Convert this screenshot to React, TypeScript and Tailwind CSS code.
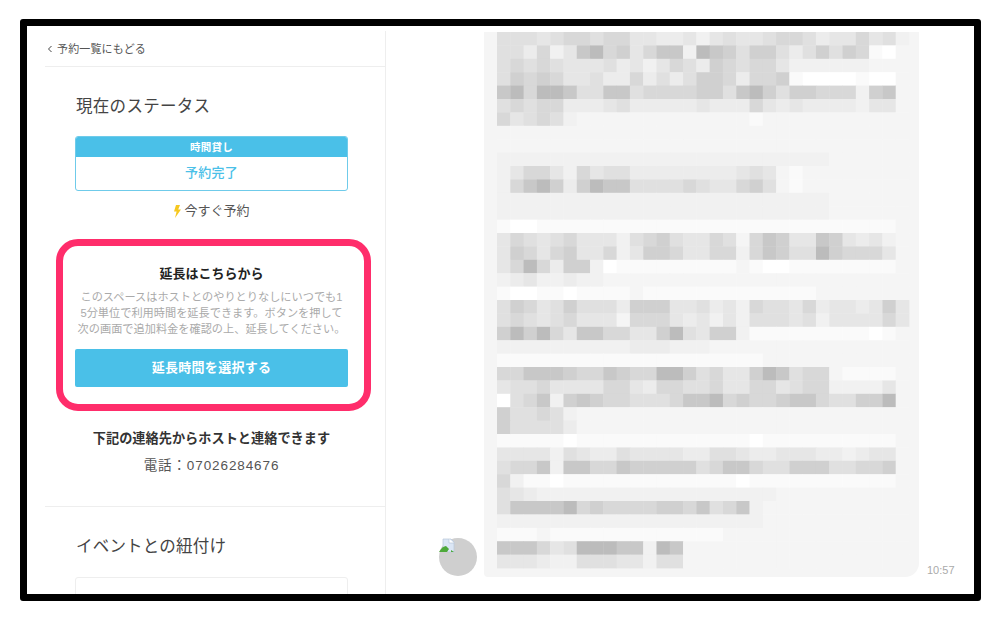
const FONT = "font-['Liberation_Sans','Noto_Sans_CJK_JP',sans-serif]";

// grey levels for the pixelated message body
const GREYS: Record<string, string> = {
  '0': '#bcbcbc',
  '1': '#c8c8c8',
  '2': '#d0d0d0',
  '3': '#d8d8d8',
  '4': '#e0e0e0',
  '5': '#e6e6e6',
  '6': '#ececec',
  '7': '#f1f1f1',
  '8': '#f5f5f5',
  '9': '#fafafa',
  w: '#ffffff',
};

const MOSAIC = [
  '4445433433556657545543346553547',
  '446375103253117012422464242' + '39w8',
  '4343455546575346234335777777888',
  '4232355466364642236332' + '9wwww9ww8',
  '1030014411433332241024223337218',
  '4343366654666665666356566667558',
  '3543478888888888888988888888888',
  '8888888888888888888888888888888',
  '8888888888888888888888888888888',
  '7777777777777777777777777888888',
  '7533573544666666665458988888888',
  '7310262011444434553248988888888',
  '7777777777777777777777777888888',
  '7777777777777777777777777888888',
  '9ww9999999999999999999999999998',
  '5345435557432455348312551256578',
  '5235325537522355337312440233358',
  '53036227w99999999989ww999999998',
  '7657767788888888888888888888888',
  '9ww99w9999899999999999998888888',
  '4235424446222554657344536556525',
  '4345435558333565757444547555535',
  '2020351133552045227999999999w98',
  '7777777777666777888888888888888',
  '9999999999999999999988888888888',
  '3311123312330024355201433899998',
  '5443555533563344355335433777758',
  'w431721233444311032332113442208',
  '2443478888888888888888888888888',
  '2444468888888888888888888888888',
  '99999w9999999999999w99999999998',
  '5555745664555566445665556676558',
  '4331711331222224311344222443328',
  '3799w9999999999999w999999999998',
  '4567777777777777777778888888888',
  '4111103233332231431788888888888',
  '7777777777777777777788888888888',
  '9998999999999999988888888888888',
  '1113540001170188888888888888888',
  '5556774445574488888888888888888',
];

const CELL_W = 13.29;
const CELL_H = 13.4;

function Mosaic() {
  return (
    <svg width="420" height="540" viewBox="0 0 420 540" className="block blur-[0.4px]">
      {MOSAIC.map((row, y) =>
        row
          .slice(0, 31)
          .split('')
          .map((c, x) => (
            <rect
              key={`${x}-${y}`}
              x={x * CELL_W}
              y={y * CELL_H}
              width={CELL_W + 0.4}
              height={CELL_H + 0.4}
              fill={GREYS[c]}
            />
          ))
      )}
    </svg>
  );
}

function BrokenImage() {
  return (
    <svg width="16" height="16" viewBox="0 0 16 16" className="block">
      <path d="M4 1h8l3 3v10H8L4 9z" fill="#dbe6f5" stroke="#b8c6d8" strokeWidth="0.7" />
      <path d="M10 1v4h5" fill="#fff" stroke="#b8c6d8" strokeWidth="0.7" />
      <path d="M0 14c2-4 5-6 7-6l3 3-2 3z" fill="#4ea93a" />
      <path d="M12 12l3 2h-3z" fill="#4ea93a" />
    </svg>
  );
}

export default function App() {
  return (
    <div className={`w-[1000px] h-[621px] bg-white overflow-hidden pt-[19px] pl-[20px] ${FONT}`}>
      <div className="w-[961px] h-[582px] border-[7px] border-black rounded-[3px] bg-white overflow-hidden flex pt-[5px]">
        {/* left column */}
        <aside className="w-[359px] shrink-0 border-r border-[#eeeeee] pl-[18px] overflow-hidden">
          <div className="h-[36px] border-b border-[#eeeeee] flex items-center pl-[2px] pt-[1px]">
            <svg width="6" height="8" viewBox="0 0 6 8" className="mr-[4px]">
              <path d="M4.5 1 1.5 4l3 3" fill="none" stroke="#444" strokeWidth="1" />
            </svg>
            <a className="text-[11px] text-[#555] tracking-[0.15px]">予約一覧にもどる</a>
          </div>

          <div className="pl-[30px] w-[303px]">
            <h2 className="mt-[27px] pl-[1px] h-[24px] leading-[24px] text-[16.5px] tracking-[0.3px] text-[#444] whitespace-nowrap">
              現在のステータス
            </h2>

            <div className="mt-[18px] w-[273px] h-[55px] rounded-[3px] border border-[#6fcbea] flex flex-col overflow-hidden">
              <div className="h-[20px] pt-[2px] bg-[#4ac0e8] text-white text-[10.5px] font-bold flex items-center justify-center tracking-[0.3px]">
                時間貸し
              </div>
              <div className="flex-1 pb-[2px] flex items-center justify-center text-[#4ac0e8] text-[13px] font-medium tracking-[0.3px]">
                予約完了
              </div>
            </div>

            <div className="mt-[10px] h-[20px] flex items-center justify-center text-[13px] text-[#555]">
              <svg width="8" height="13" viewBox="0 0 8 13" className="mr-[3px]">
                <path d="M3 0h4L5.2 4.6H8L2 13l1.6-6.4H1z" fill="#f6c81f" />
              </svg>
              今すぐ予約
            </div>

            {/* highlighted extension box */}
            <div className="mt-[18px] -ml-[19px] w-[315px] h-[172px] border-[7px] border-[#ff2d6b] rounded-[22px] pt-[18px] pl-[12px] pr-[16px]">
              <h3 className="h-[20px] leading-[20px] text-center text-[13px] font-bold text-[#222]">
                延長はこちらから
              </h3>
              <p className="mt-[5px] text-[11.2px] leading-[16px] text-[#aaaaaa] text-center whitespace-nowrap">
                <span className="block">このスペースはホストとのやりとりなしにいつでも1</span>
                <span className="block">5分単位で利用時間を延長できます。ボタンを押して</span>
                <span className="block">次の画面で追加料金を確認の上、延長してください。</span>
              </p>
              <button className="mt-[12px] w-[273px] h-[38px] rounded-[2px] bg-[#4ac0e8] text-white text-[13px] font-bold tracking-[0.3px]">
                延長時間を選択する
              </button>
            </div>

            <p className="mt-[18px] h-[20px] w-[273px] leading-[20px] text-center text-[13.2px] font-bold text-[#333] whitespace-nowrap">
              下記の連絡先からホストと連絡できます
            </p>
            <p className="mt-[7px] h-[20px] w-[273px] leading-[20px] text-center text-[13.5px] text-[#555] tracking-[0.9px]">
              電話：07026284676
            </p>
          </div>

          <div className="mt-[30px] border-t border-[#eeeeee]" />

          <div className="pl-[30px]">
            <h2 className="mt-[27px] pl-[1px] h-[24px] leading-[24px] text-[16.5px] tracking-[0.2px] text-[#444] whitespace-nowrap">
              イベントとの紐付け
            </h2>
            <div className="mt-[19px] w-[273px] h-[40px] rounded-[3px] border border-[#eeeeee]" />
          </div>
        </aside>

        {/* message pane */}
        <main className="flex-1 min-w-0 flex items-end pl-[53px] pb-[17px]">
          <div className="relative w-[38px] h-[38px] rounded-full bg-[#cfcfcf] shrink-0 mb-[1px]">
            <div className="absolute left-0 top-0">
              <BrokenImage />
            </div>
          </div>
          <div className="ml-[7px] w-[435px] h-[545px] bg-[#f5f5f5] rounded-bl-[4px] rounded-br-[14px] pl-[13px] overflow-hidden shrink-0">
            <Mosaic />
          </div>
          <span className="ml-[8px] text-[11px] leading-[14px] text-[#aaaaaa]">10:57</span>
        </main>
      </div>
    </div>
  );
}
